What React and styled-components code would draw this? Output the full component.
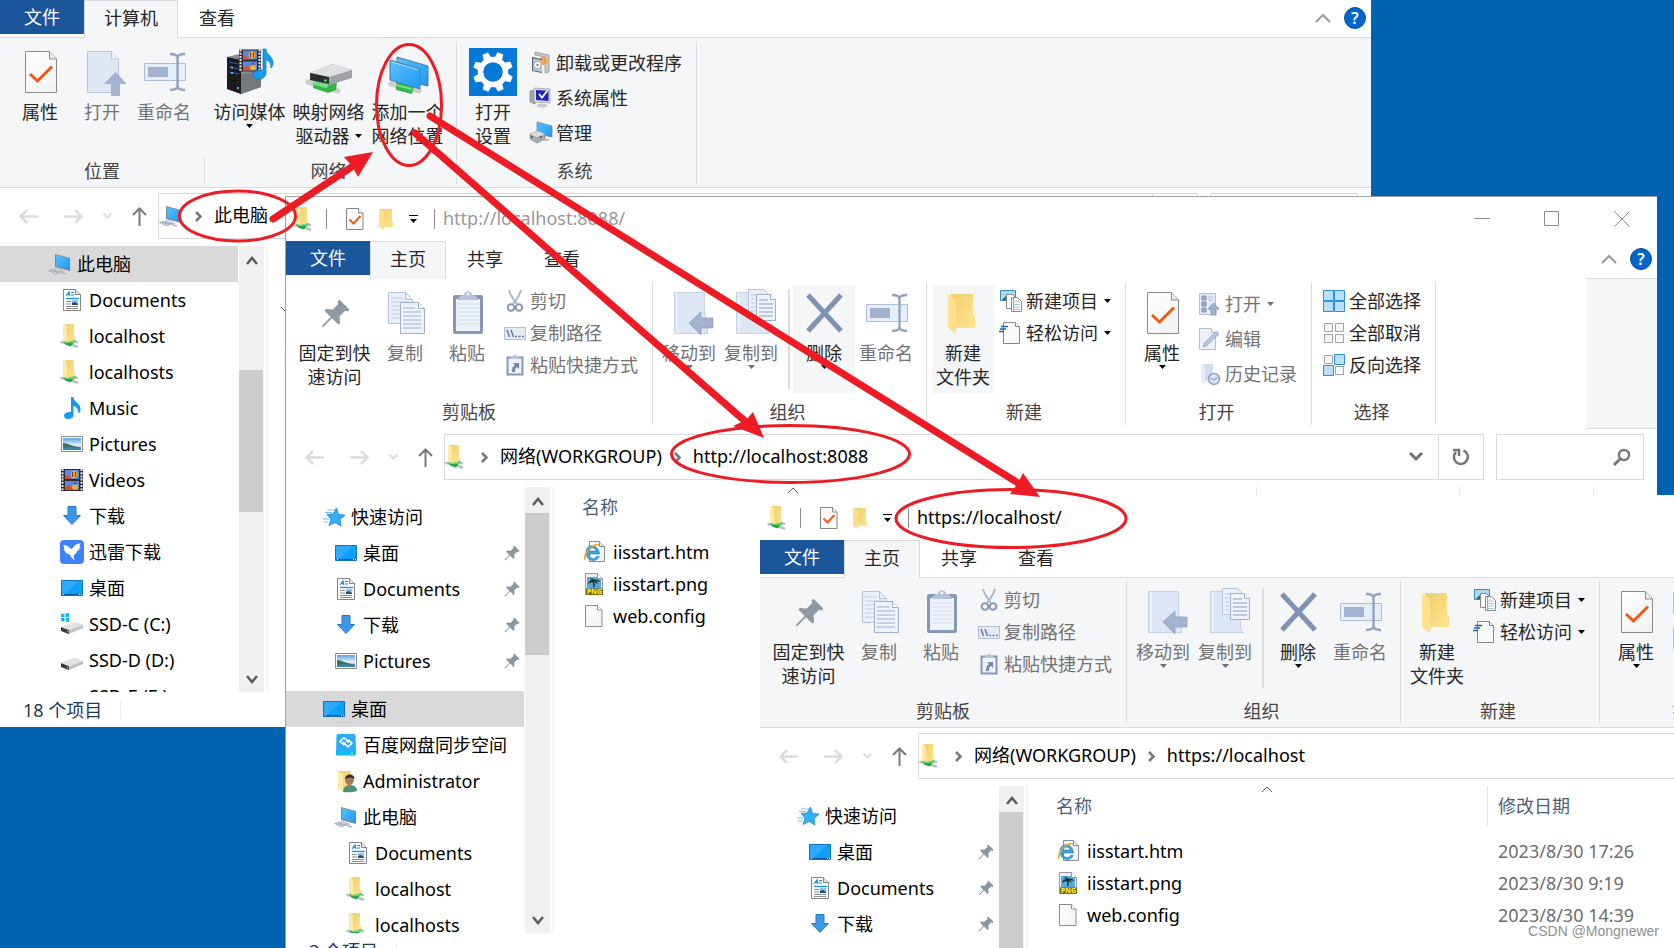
import React from "react";
import styled, { createGlobalStyle, css } from "styled-components";

const line = "#dadbdc";
const panel = "#f5f6f7";
const red = "#ed1c24";

/* ---------- shared drawings ---------- */

const Defs = () => (
  <DefsSvg aria-hidden="true">
    <defs>
      <linearGradient id="gold" x1="0" y1="0" x2="1" y2="1">
        <stop offset="0" stopColor="#efcf6c" />
        <stop offset="1" stopColor="#ffe491" />
      </linearGradient>
      <linearGradient id="screen" x1="0" y1="0" x2="1" y2="1">
        <stop offset="0" stopColor="#5cc0fb" />
        <stop offset="1" stopColor="#1a9bf6" />
      </linearGradient>
      <linearGradient id="metal" x1="0" y1="0" x2="1" y2="1">
        <stop offset="0" stopColor="#e4e5e7" />
        <stop offset="1" stopColor="#aeb0b4" />
      </linearGradient>
      <linearGradient id="sky" x1="0" y1="0" x2="0" y2="1">
        <stop offset="0" stopColor="#5f9fe4" />
        <stop offset="0.6" stopColor="#e4f1fb" />
        <stop offset="1" stopColor="#3d7ca4" />
      </linearGradient>
      <linearGradient id="sheet" x1="0" y1="0" x2="1" y2="1">
        <stop offset="0" stopColor="#ffffff" />
        <stop offset="1" stopColor="#f0f1f3" />
      </linearGradient>
    </defs>
  </DefsSvg>
);

const film = (
  <>
    <path d="M1 1h22v22H1z" fill="#2c2c2c" />
    <path d="M2.500 1v22M21.500 1v22" stroke="#e8e8e8" strokeWidth="2" strokeDasharray="2 1.2" />
    <path d="M5 2h14v9H5zM5 13h14v9H5z" fill="#5a86e4" />
    <path d="M5 11V7l3 1 4 3zM5 22v-3l5-2 3 5z" fill="#d9502e" />
    <ellipse cx="14" cy="6.500" rx="3.400" ry="3.800" fill="#e8b62c" />
    <path d="M12.500 4v5M15.500 4v5" stroke="#9c2c1e" strokeWidth="1.200" />
    <ellipse cx="15" cy="19" rx="3" ry="2.600" fill="#e8b62c" />
    <path d="M15 14l1.500 2h-3z" fill="#7c2420" />
  </>
);

const netFolder = (
  <>
    <path d="M5 0h9v12l1 1v5H5z" fill="url(#gold)" />
    <path d="M3 0l4 2v17l-4-2z" fill="#ffe9a6" />
    <path d="M1.500 18l4 1M13 21l4 1.500M15 18h2" stroke="#b9c0bd" strokeWidth="2.500" strokeLinecap="round" />
    <path d="M3 17.500l5 .5 8-2-4 5-1 1.500-5-1.500z" fill="#22a843" />
    <path d="M3 17.500l5 .5 8-2-3 3H6z" fill="#62d878" />
  </>
);

const computer = (
  <>
    <path d="M7 2l15 4v13L7 15z" fill="#7d8892" />
    <path d="M8 3l13.500 3.500v11L8 14z" fill="url(#screen)" />
    <path d="M11 18l6 1.500-3 1.500-5-1z" fill="#c2c6ca" />
    <path d="M0.500 18.500l8-2 6 2.500-7 3z" fill="#d3dae1" stroke="#98a4b0" strokeWidth="0.700" />
    <path d="M3 18.500l7 2M5.500 18l6.500 2" stroke="#8d99a5" strokeWidth="0.700" />
    <path d="M13 21.500l4 1 2-1-4-1z" fill="#aab3bb" />
  </>
);

const textDoc = (
  <>
    <path d="M3.500 1.500h12l5 5v16h-17z" fill="#fdfdfd" stroke="#848484" />
    <path d="M15.500 1.500v5h5" fill="#e7e7e7" stroke="#848484" />
    <path d="M6 8l3-4 .8 4M7 6.500h2.500M11 4.500h3M11 7h3" fill="none" stroke="#1793dc" strokeWidth="1.200" />
    <path d="M6 10.500h13" stroke="#1793dc" strokeWidth="1.300" />
    <path d="M6 13.500h5M6 16h5M6 18.500h12M6 20.500h12" stroke="#8e8e8e" />
    <path d="M12 12h6v5h-6z" fill="#8dc3ef" />
    <path d="M12 17v-2l3-1 3 2v1z" fill="#1f4d73" />
  </>
);

const drive = (
  <>
    <path d="M1 15l14-5 8 3v3l-14 6-8-3z" fill="url(#metal)" />
    <path d="M1 15l8 3v4l-8-3z" fill="#393b3e" />
    <path d="M1 15l14-5 8 3-14 5z" fill="#e2e3e5" />
    <path d="M7 19.300l1.500.6" stroke="#42d04c" strokeWidth="1.500" />
  </>
);

const pinShape = "M15 2l7 7-1 1.500-2-.5-4 4 .3 5-1.300 1-4.600-4.600L3 22l-1-1 6.500-6.500L4 10l1-1.300 5 .3 4-4-.5-2z";

const smallIcons = {
  pc: computer,
  doc: textDoc,
  netFolder,
  film,
  music: (
    <path
      d="M11 1h2.500c0 5 7 6 7 12 0 2-1 4-2 5 0-4-1-7-5-8v9c0 3-3 4-5.500 4S4 21.500 4 19.500s3-4 7-3.500z"
      fill="#129bf0"
    />
  ),
  pictures: (
    <>
      <path d="M1.500 4.500h21v15h-21z" fill="#fff" stroke="#8d8d8d" />
      <path d="M3 6h18v12H3z" fill="url(#sky)" />
      <path d="M3 11c4 0 8 3 18 4.500V18H3z" fill="#3b6b62" />
      <path d="M3 16c6-2 12 0 18 0v2H3z" fill="#3c83ad" />
    </>
  ),
  download: <path d="M8 2.500h8v9h4.500L12 20.500 3.500 11.500H8z" fill="#3c97e8" stroke="#2579c4" />,
  xunlei: (
    <>
      <rect width="24" height="24" rx="4" fill="#3f80fb" />
      <path
        d="M3 5c3 0 5 1 7 3 1 1.500 2 1 3-.5 2-3 5-4 8-4.500-1 1-1 2-1.500 3.500l1.500 1-2 .5.500 2-2 .5c-1 3-3 4-4 5l1 5c-2-2-4-4-5-6-4-1-5-3-5.500-6C4 7.500 4 6 3 5z"
        fill="#fff"
      />
    </>
  ),
  desktop: (
    <>
      <path d="M1.500 4.500h21v15h-21z" fill="#109efb" stroke="#1173b8" />
      <path d="M2 5h17L5 18H2z" fill="#2eabfc" />
      <path d="M2 18.500h20" stroke="#0c5f9e" />
      <path d="M3 18.500h1M19 18.500h1M21 18.500h1" stroke="#fff" />
    </>
  ),
  driveC: (
    <>
      {drive}
      <path d="M1 2l3.500-.5V5H1zM5.500 1.500L9 1v4H5.500zM1 6h3.500v3.500L1 9zM5.500 6H9v4l-3.500-.5z" fill="#12b3f3" />
    </>
  ),
  drive,
  star: (
    <>
      <path
        d="M14.500 3l2 6.500 6.500.5-5 4.500 1 6.500-6-3.500-6 3 2-6.500L5 9.500l6-.5z"
        fill="#35aef5"
        stroke="#1788d0"
        strokeWidth="0.800"
      />
      <path d="M5 5h8M3 7.500h7M1 14h6M2 17h4" stroke="#6cc3f5" />
    </>
  ),
  baidu: (
    <>
      <path d="M4 1h16c1 0 1.500 1 1.500 2L22 20H2L2.500 3c0-1 .5-2 1.500-2z" fill="#29adf7" />
      <path d="M2 18h20v3c0 1-.5 1.500-1.500 1.500h-17C2.500 22.500 2 22 2 21z" fill="#12b9f3" />
      <path d="M17 20.500h2" stroke="#fff" />
      <path
        d="M10 4.500l-4 4 3.500 3 2-2M14 14l4-4-3.500-3-2 2M10 4.500l5 5M9 9l5 5"
        fill="none"
        stroke="#fff"
        strokeWidth="1.600"
      />
    </>
  ),
  admin: (
    <>
      <path d="M5 2h12v18H5z" fill="url(#gold)" />
      <path d="M4 2l5 3v18l-5-3z" fill="#ffe9a6" />
      <path d="M9 23c0-5 3-7 7-7s7 2 7 6c-4 1.500-10 1.500-14 1z" fill="#4c9279" />
      <circle cx="15.500" cy="11" r="4.500" fill="#a97856" />
      <path d="M11 10c0-6 9.500-6 9.500 0-3-2-6-2-9.500 0z" fill="#3d2d25" />
      <path d="M13.500 15l2 4 2-4z" fill="#a97856" />
    </>
  ),
  ie: (
    <>
      <path d="M7.500 1.500h10l5 5v15h-15z" fill="url(#sheet)" stroke="#8d8d8d" />
      <path d="M17.500 1.500v5h5" fill="#e7e7e7" stroke="#8d8d8d" />
      <path
        d="M17.500 14H7c0 5 6 6 7.500 2.500h2.700C15 22.500 4 22 4 12.500S17 3.500 17.500 14zM7.300 11h6.900C13.500 7 8 7 7.300 11z"
        fill="#3ea4de"
        stroke="#1b77b8"
        strokeWidth="0.600"
      />
      <path d="M3 20C-1 15 12 1 17 5c-5-1-14 6-14 15z" fill="#f1b928" stroke="#d89a14" strokeWidth="0.600" />
    </>
  ),
  png: (
    <>
      <path d="M3.500 1.500h12l5 5v16h-17z" fill="#eceef0" stroke="#989898" />
      <path d="M15.500 1.500v5h5" fill="#fff" stroke="#989898" />
      <path d="M5 5h10v2h4v10H5z" fill="#55a9dc" />
      <path d="M11 15c1-3 0-4-1-5l-4 2c1-3 2-4 4-4l-2-2c3 0 4 1 5 2 2-1 4 0 5 2l-4-1 2 3-4-2c1 2 1 3 .5 5z" fill="#16352c" />
      <path d="M4 16.500h17v6.500H4z" fill="#7a6a10" />
      <text x="12.500" y="22.300" fontSize="7" fontWeight="700" textAnchor="middle" fill="#fdf04d">
        PNG
      </text>
    </>
  ),
  file: (
    <>
      <path d="M3.500 1.500h12l4.500 4.500v16.500H3.500z" fill="url(#sheet)" stroke="#8d8d8d" />
      <path d="M15.500 1.500V6H20" fill="#fff" stroke="#8d8d8d" />
    </>
  ),
  pin: <path d={pinShape} fill="#8b98a1" />,
  checkDoc: (
    <>
      <path d="M3.500 1.500h12l4.500 4.500v16.500H3.500z" fill="#fafafa" stroke="#858585" />
      <path d="M15.500 1.500V6H20" fill="#fff" stroke="#858585" />
      <path d="M6.500 12.500l4 4 7-7.500" fill="none" stroke="#f25c13" strokeWidth="2" />
    </>
  ),
  folder: (
    <>
      <path d="M6 2h12v13l1 1v4H6z" fill="url(#gold)" />
      <path d="M5 2l5 3v18l-5-3z" fill="#ffe08a" />
    </>
  ),
  uninstall: (
    <>
      <path d="M6 1l14 3v17l-4 1V6L6 4z" fill="#c5c7c9" stroke="#8c8f91" strokeWidth="0.700" />
      <circle cx="14" cy="10" r="4" fill="#f0a23b" />
      <path d="M3 6l10 2v14L3 20z" fill="#5a6268" />
      <path d="M4 7.500l9 1.500v12l-9-1.500z" fill="#b9c4c9" />
      <circle cx="8.500" cy="14" r="3.800" fill="#eef1f2" stroke="#8d979c" strokeWidth="0.700" />
      <circle cx="8.500" cy="14" r="1" fill="#59656b" />
    </>
  ),
  sysProps: (
    <>
      <path d="M1 5l5-1v14l-5-2z" fill="#a5a8ac" stroke="#707478" strokeWidth="0.600" />
      <path d="M5 2l16 1v14L5 16z" fill="#d9dadc" stroke="#8a8d92" strokeWidth="0.600" />
      <path d="M7 4l12.500.7V15L7 14z" fill="#2026b8" />
      <path d="M10 8l3 3.500 5.500-7" fill="none" stroke="#fff" strokeWidth="1.800" />
      <ellipse cx="13" cy="19.500" rx="5.500" ry="2" fill="#c8cacd" />
    </>
  ),
  manage: (
    <>
      <path d="M8 1l15 4v11L8 13z" fill="url(#screen)" stroke="#6d7f8c" strokeWidth="0.700" />
      <path d="M1 13l8-3 7 3v5l-8 4-7-4z" fill="#a7adb2" stroke="#777d82" strokeWidth="0.600" />
      <path d="M1 13l8-3 7 3-8 3z" fill="#d8dcdf" />
      <path d="M3 15v2M12 15v2" stroke="#3f4548" strokeWidth="1.500" />
      <path d="M16 18h5l-3 2h-4z" fill="#b7bbbf" />
    </>
  ),
  scissors: (
    <>
      <path d="M6 1c1 4 4 9 8 14M18 1c-1 4-4 9-8 14" fill="none" stroke="#a8b5cd" strokeWidth="1.800" />
      <circle cx="8" cy="18.500" r="3.300" fill="none" stroke="#8797b7" strokeWidth="2" />
      <circle cx="16" cy="18.500" r="3.300" fill="none" stroke="#8797b7" strokeWidth="2" />
    </>
  ),
  copyPath: (
    <>
      <path d="M1.500 6.500h21v12h-21z" fill="#e4ebf6" stroke="#b2bfd6" />
      <path d="M4 9l2.500 7M8 9l2.500 7" stroke="#68799c" strokeWidth="1.500" />
      <path d="M12 15.500h2M15.500 15.500h2M19 15.500h2" stroke="#68799c" strokeWidth="1.500" />
    </>
  ),
  pasteLink: (
    <>
      <path d="M4.500 4.500h15v17h-15z" fill="#edf2fa" stroke="#8797b7" strokeWidth="2" />
      <path d="M8 5V3h2.500l1.500-2 1.500 2H16v2z" fill="#b9c5da" />
      <path d="M9 19c0-4 1-6 3-7l-2-2h6v6l-2-2c-2 1-2 3-2 5z" fill="#7486aa" />
    </>
  ),
  newItem: (
    <>
      <path d="M1.500 1.500h15v10h-15z" fill="#a8dbf3" stroke="#3f8cb5" />
      <path d="M3 11l4-4 3 4z" fill="#236a4f" />
      <path d="M7.500 5.500h6l3 3v11h-9z" fill="#fff" stroke="#8a8a8a" />
      <path d="M12.500 8.500h6l4 4v10h-10z" fill="#fff" stroke="#8a8a8a" />
      <path d="M14 13h7M14 15.500h7M14 18h7M14 20.500h7" stroke="#9fc6e6" />
      <path d="M14.500 9v13" stroke="#e98a8a" />
    </>
  ),
  easyAccess: (
    <>
      <path d="M4.500 1.500h12l4 4v17h-16z" fill="#fafafa" stroke="#858585" />
      <path d="M16.500 1.500v4h4" fill="#fff" stroke="#858585" />
      <path d="M2 5.500h7M1 8h6M0 10.500h5" stroke="#1668b4" strokeWidth="1.400" />
    </>
  ),
  openSmall: (
    <>
      <path d="M1.500 1.500h16v21h-16z" fill="#e4ebf6" stroke="#b0bed6" />
      <path d="M4 4h4v4H4zM4 10h4v4H4zM4 16h4v4H4z" fill="#9dadc9" stroke="#7f90b1" />
      <path d="M10 5h5M10 8h5" stroke="#b0bed6" />
      <path d="M15.500 11l5.500 6h-3v6h-5v-6h-3z" fill="#a3b2cd" stroke="#8b9bbb" />
    </>
  ),
  edit: (
    <>
      <path d="M1.500 1.500h12l4 4v17h-16z" fill="#edf2fa" stroke="#b0bed6" />
      <path d="M13.500 1.500v4h4" fill="#fff" stroke="#b0bed6" />
      <path d="M5 20l1.500-4L18 4.500l3 2.500L9 18.500z" fill="#b7c4da" stroke="#94a4c2" strokeWidth="0.800" />
    </>
  ),
  history: (
    <>
      <path d="M3 2h12v17H3z" fill="#d3ddec" />
      <path d="M3 2l4 2v19l-4-3z" fill="#e5ecf6" />
      <circle cx="16" cy="17" r="5.500" fill="#dce4f0" stroke="#95a4c0" strokeWidth="1.500" />
      <path d="M12.500 16l3.500 2 3.500-2.500" fill="none" stroke="#95a4c0" strokeWidth="1.300" />
    </>
  ),
  selectAll: (
    <path
      d="M1.500 1.500h10v10h-10zM12.500 1.500h10v10h-10zM1.500 12.500h10v10h-10zM12.500 12.500h10v10h-10z"
      fill="#b8e0fb"
      stroke="#2a92dd"
    />
  ),
  selectNone: (
    <path d="M2.500 2.500h8v8h-8zM13.500 2.500h8v8h-8zM2.500 13.500h8v8h-8zM13.500 13.500h8v8h-8z" fill="#f7f7f7" stroke="#a2a2a2" />
  ),
  invert: (
    <>
      <path d="M2.500 2.500h8v8h-8zM13.500 13.500h8v8h-8z" fill="#f7f7f7" stroke="#a2a2a2" />
      <path d="M12.500 1.500h10v10h-10zM1.500 12.500h10v10h-10z" fill="#b8e0fb" stroke="#2a92dd" />
    </>
  ),
};

const gearTeeth = [0, 45, 90, 135, 180, 225, 270, 315];

const bigIcons = {
  properties: (
    <>
      <path d="M9.500 3.500h24l7 7v34h-31z" fill="url(#sheet)" stroke="#8b8b8b" />
      <path d="M33.500 3.500v7.500h7.500" fill="#e9e9e9" stroke="#8b8b8b" />
      <path d="M14 26l7.500 7L36 18.500" fill="none" stroke="#f2590f" strokeWidth="3" />
    </>
  ),
  open: (
    <>
      <path d="M9.500 3.500h24l7 7v34h-31z" fill="#e0e8f5" stroke="#b7c5dd" />
      <path d="M33.500 3.500v7.500h7.500" fill="#f1f5fb" stroke="#b7c5dd" />
      <path d="M37.500 24L49 36h-7v12h-9V36h-7z" fill="#a3b2ce" />
    </>
  ),
  rename: (
    <>
      <path d="M4.500 15.500h41v17h-41z" fill="#e6eefa" stroke="#aebcd6" />
      <path d="M8 19h20v10H8z" fill="#a3b2ce" />
      <path
        d="M37.500 10v28M30 6c5 0 7.500 1 7.500 4 0-3 2.500-4 7.500-4M30 42c5 0 7.500-1 7.500-4 0 3 2.500 4 7.500 4"
        fill="none"
        stroke="#93a3c1"
        strokeWidth="2.400"
      />
    </>
  ),
  media: (
    <>
      <path d="M1 9l12-3 22 7v26l-20 7-14-5z" fill="#8c8f93" />
      <path d="M1 9l14 3v34L1 41z" fill="#191b1e" />
      <path d="M3 14l10 2M3 19l10 2M3 24l10 2" stroke="#2f5fa0" />
      <path d="M5 19.500h2M5 25h2M11 40h2" stroke="#35c6f5" strokeWidth="2" />
      <path d="M15 26l20-3v16l-20 7z" fill="#75787d" />
      <svg x="12" y="0" width="24" height="25" viewBox="0 0 24 24">{film}</svg>
      <path
        d="M37 1h3c0 6 7 7 7 14 0 2-1 4-2 5 0-4-1-7-5-8v13c0 4-4 6-7 6s-6-1-6-4 4-5 10-5z"
        fill="#159df0"
        stroke="#0d73bb"
        strokeWidth="0.700"
      />
    </>
  ),
  netDrive: (
    <>
      <path d="M3 34l30 9" stroke="#c9cdcc" strokeWidth="5" strokeLinecap="round" />
      <path d="M9 33l14 4 9-3-1 8-8 3-15-5z" fill="#35b64a" />
      <path d="M9 33l14 4-1 3-13-3z" fill="#79dd84" />
      <path d="M5 25L27 16l20 6v8l-23 7-19-5z" fill="#9ea1a5" />
      <path d="M5 25L27 16l20 6-23 7z" fill="#dfe0e2" />
      <path d="M5 25l19 4v7L5 32z" fill="#2b2d30" />
      <path d="M19 32.500h3" stroke="#43dd4e" strokeWidth="2" />
    </>
  ),
  addNet: (
    <>
      <path d="M13 9l31 9v20l-31-7z" fill="url(#screen)" stroke="#4f7f9c" />
      <path d="M7 36l28 7" stroke="#c9cdcc" strokeWidth="5" strokeLinecap="round" />
      <path d="M12 32l18 5-2 9-16-4z" fill="#35b64a" />
      <path d="M12 36l16 4-1 2-15-4z" fill="#79dd84" />
      <path d="M6 12l30 9v20L6 32z" fill="url(#screen)" stroke="#4f7f9c" />
      <path d="M7.500 14l27 8" stroke="#a9dcfa" />
    </>
  ),
  gear: (
    <>
      <path d="M0 0h48v48H0z" fill="#0478d7" />
      <circle cx="24" cy="24" r="12.500" fill="none" stroke="#fff" strokeWidth="5.500" />
      {gearTeeth.map((angle) => (
        <path key={angle} d="M20 10l1-6h6l1 6z" fill="#fff" transform={`rotate(${angle + 22} 24 24)`} />
      ))}
    </>
  ),
  pin: (
    <svg x="8" y="8" width="33" height="33" viewBox="0 0 24 24">
      <path d={pinShape} fill="#8e9aa3" />
    </svg>
  ),
  copy: (
    <>
      <path d="M7.500 3.500h17l7 7v24h-24z" fill="#e9f0fa" stroke="#b5c4dc" />
      <path d="M24.500 3.500v7h7" fill="none" stroke="#b5c4dc" />
      <path d="M10 9h12M10 13h18M10 17h9M10 21h9M10 25h9M10 29h9" stroke="#c4d0e4" />
      <path d="M19.500 13.500h18l6 6v25h-24z" fill="#edf3fb" stroke="#9fb0cd" />
      <path d="M37.500 13.500v6h6" fill="#fff" stroke="#9fb0cd" />
      <path d="M22 19h12M22 23h18M22 27h18M22 31h18M22 35h18M22 39h18" stroke="#9fb0cd" />
    </>
  ),
  paste: (
    <>
      <rect x="10" y="6" width="30" height="39" rx="2" fill="#8797b7" />
      <path d="M13 10h24v32H13z" fill="#edf3fb" />
      <path d="M14 15h22M14 19h22M14 23h22M14 27h22M14 31h22M14 35h22" stroke="#d3deee" />
      <path d="M15 11c0-3 3-5 6-5 0-5 8-5 8 0 3 0 6 2 6 5z" fill="#b5c2d9" />
      <circle cx="25" cy="5" r="1.500" fill="#edf3fb" />
    </>
  ),
  moveTo: (
    <>
      <path d="M9.500 3.500h30v23l3 3v15h-33z" fill="#dce6f4" stroke="#c6d3e7" />
      <path d="M12 4v40" stroke="#e9f0f9" strokeWidth="2" />
      <path d="M24 34l12-11v6h12v10H36v7z" fill="#a3b2ce" stroke="#8d9dbd" strokeWidth="0.700" />
    </>
  ),
  copyTo: (
    <>
      <path d="M9.500 3.500h30v38l3 3h-33z" fill="#dce6f4" stroke="#c6d3e7" />
      <path d="M12 4v40" stroke="#e9f0f9" strokeWidth="2" />
      <path d="M21.500.500h15l5 5v21h-20z" fill="#e9f0fa" stroke="#b5c4dc" />
      <path d="M24 6h10M24 10h4M24 14h4M24 18h4M24 22h4" stroke="#b5c4dc" />
      <path d="M29.500 5.500h14l5 5v21h-19z" fill="#edf3fb" stroke="#9fb0cd" />
      <path d="M43.500 5.500v5h5" fill="#fff" stroke="#9fb0cd" />
      <path d="M32 11h9M32 15h14M32 19h14M32 23h14M32 27h14" stroke="#8d9fc0" />
    </>
  ),
  remove: <path d="M8 6l33 36M41 6L8 42" stroke="#8192b4" strokeWidth="5" />,
  newFolder: (
    <>
      <path d="M12 5h22v21l2 2v11H12z" fill="url(#gold)" />
      <path d="M9 5l8 6v34l-8-6z" fill="#ffe08c" />
    </>
  ),
};

const SmallIcon = ({ name, size = 24 }) => (
  <Drawing width={size} height={size} viewBox="0 0 24 24" aria-hidden="true">
    {smallIcons[name]}
  </Drawing>
);

const BigIcon = ({ name }) => (
  <Drawing width="48" height="48" viewBox="0 0 48 48" aria-hidden="true">
    {bigIcons[name]}
  </Drawing>
);

const Caret = ({ muted }) => (
  <Drawing width="7" height="4" viewBox="0 0 7 4" aria-hidden="true">
    <path d="M0 0h7L3.500 4z" fill={muted ? "#6d6d6d" : "#000"} />
  </Drawing>
);

/* ---------- data ---------- */

const computerGroups = [
  {
    label: "位置",
    shortRule: true,
    lead: true,
    buttons: [
      { icon: "properties", lines: ["属性"] },
      { icon: "open", lines: ["打开"], off: true },
      { icon: "rename", lines: ["重命名"], off: true },
    ],
  },
  {
    label: "网络",
    buttons: [
      { icon: "media", lines: ["访问媒体"], wide: true, caret: true },
      { icon: "netDrive", lines: ["映射网络", "驱动器"], wide: true, inlineCaret: true },
      { icon: "addNet", lines: ["添加一个", "网络位置"], wide: true },
    ],
  },
  {
    label: "系统",
    roomy: true,
    buttons: [{ icon: "gear", lines: ["打开", "设置"] }],
    list: [
      { icon: "uninstall", text: "卸载或更改程序" },
      { icon: "sysProps", text: "系统属性" },
      { icon: "manage", text: "管理" },
    ],
  },
];

const homeGroups = [
  {
    label: "剪贴板",
    lead: true,
    buttons: [
      { icon: "pin", lines: ["固定到快", "速访问"], wide: true },
      { icon: "copy", lines: ["复制"], off: true },
      { icon: "paste", lines: ["粘贴"], off: true },
    ],
    list: [
      { icon: "scissors", text: "剪切", off: true },
      { icon: "copyPath", text: "复制路径", off: true },
      { icon: "pasteLink", text: "粘贴快捷方式", off: true },
    ],
  },
  {
    label: "组织",
    buttons: [
      { icon: "moveTo", lines: ["移动到"], off: true, caret: true },
      { icon: "copyTo", lines: ["复制到"], off: true, caret: true, ruleAfter: true },
      { icon: "remove", lines: ["删除"], caret: true, tinted: true },
      { icon: "rename", lines: ["重命名"], off: true },
    ],
  },
  {
    label: "新建",
    buttons: [{ icon: "newFolder", lines: ["新建", "文件夹"], tinted: true }],
    list: [
      { icon: "newItem", text: "新建项目", caret: true },
      { icon: "easyAccess", text: "轻松访问", caret: true },
    ],
  },
  {
    label: "打开",
    roomy: true,
    buttons: [{ icon: "properties", lines: ["属性"], caret: true }],
    list: [
      { icon: "openSmall", text: "打开", off: true, caret: true },
      { icon: "edit", text: "编辑", off: true },
      { icon: "history", text: "历史记录", off: true },
    ],
  },
  {
    label: "选择",
    list: [
      { icon: "selectAll", text: "全部选择" },
      { icon: "selectNone", text: "全部取消" },
      { icon: "invert", text: "反向选择" },
    ],
  },
];

const computerTree = [
  { icon: "pc", text: "此电脑", depth: 1, selected: true },
  { icon: "doc", text: "Documents", depth: 2 },
  { icon: "netFolder", text: "localhost", depth: 2 },
  { icon: "netFolder", text: "localhosts", depth: 2 },
  { icon: "music", text: "Music", depth: 2 },
  { icon: "pictures", text: "Pictures", depth: 2 },
  { icon: "film", text: "Videos", depth: 2 },
  { icon: "download", text: "下载", depth: 2 },
  { icon: "xunlei", text: "迅雷下载", depth: 2 },
  { icon: "desktop", text: "桌面", depth: 2 },
  { icon: "driveC", text: "SSD-C (C:)", depth: 2 },
  { icon: "drive", text: "SSD-D (D:)", depth: 2 },
  { icon: "drive", text: "SSD-E (E:)", depth: 2 },
];

const quickTree = [
  { icon: "star", text: "快速访问", depth: 0, spaced: true },
  { icon: "desktop", text: "桌面", depth: 1, pinned: true },
  { icon: "doc", text: "Documents", depth: 1, pinned: true },
  { icon: "download", text: "下载", depth: 1, pinned: true },
];

const fullTree = [
  ...quickTree,
  { icon: "pictures", text: "Pictures", depth: 1, pinned: true },
  { icon: "desktop", text: "桌面", depth: 0, spaced: true, selected: true },
  { icon: "baidu", text: "百度网盘同步空间", depth: 1 },
  { icon: "admin", text: "Administrator", depth: 1 },
  { icon: "pc", text: "此电脑", depth: 1 },
  { icon: "doc", text: "Documents", depth: 2 },
  { icon: "netFolder", text: "localhost", depth: 2 },
  { icon: "netFolder", text: "localhosts", depth: 2 },
];

const files = [
  { icon: "ie", name: "iisstart.htm", date: "2023/8/30 17:26" },
  { icon: "png", name: "iisstart.png", date: "2023/8/30 9:19" },
  { icon: "file", name: "web.config", date: "2023/8/30 14:39" },
];

/* ---------- window parts ---------- */

function TitleBar({ title, active, controls }) {
  return (
    <TitleRow>
      <SmallIcon name="netFolder" />
      <TitleRule />
      <QuickButtons>
        <PlainButton aria-label="属性">
          <SmallIcon name="checkDoc" />
        </PlainButton>
        <PlainButton aria-label="新建文件夹">
          <SmallIcon name="folder" />
        </PlainButton>
      </QuickButtons>
      <PlainButton aria-label="自定义">
        <Drawing width="9" height="9" viewBox="0 0 9 9">
          <path d="M0 .5h9" stroke="#000" />
          <path d="M1 4h7L4.500 8z" />
        </Drawing>
      </PlainButton>
      <TitleRule $second />
      <TitleText $active={active}>{title}</TitleText>
      {controls && (
        <WindowControls>
          <ControlButton aria-label="最小化">
            <Drawing width="16" height="16" fill="none" stroke="#8c8c8c">
              <path d="M0 7.500h16" />
            </Drawing>
          </ControlButton>
          <ControlButton aria-label="最大化">
            <Drawing width="16" height="16" fill="none" stroke="#8c8c8c">
              <path d="M.5.5h14v14H.5z" />
            </Drawing>
          </ControlButton>
          <ControlButton aria-label="关闭">
            <Drawing width="16" height="16" fill="none" stroke="#8c8c8c">
              <path d="M.5.5l15 15M15.500.5l-15 15" />
            </Drawing>
          </ControlButton>
        </WindowControls>
      )}
    </TitleRow>
  );
}

function Tabs({ names, plain }) {
  return (
    <TabRow $plain={plain}>
      <FileTab>文件</FileTab>
      {names.map((name, index) => (
        <Tab key={name} $active={index === 0}>
          {name}
        </Tab>
      ))}
      <TabTools>
        <PlainButton aria-label="折叠功能区">
          <Drawing width="16" height="10" fill="none" stroke="#9b9b9b" strokeWidth="2">
            <path d="M1 9l7-7 7 7" />
          </Drawing>
        </PlainButton>
        <HelpButton aria-label="帮助">?</HelpButton>
      </TabTools>
    </TabRow>
  );
}

function RibbonGroup({ group, plain }) {
  return (
    <Group $lead={group.lead} $shortRule={group.shortRule}>
      <GroupContent>
        {group.buttons?.map((item) => (
          <React.Fragment key={item.lines.join("")}>
            <BigButton disabled={item.off} $wide={item.wide} $tinted={plain && item.tinted}>
              <BigIcon name={item.icon} />
              <BigLabel>
                {item.lines.map((text, index) => (
                  <span key={text}>
                    {text}
                    {item.inlineCaret && index === 1 && <Caret />}
                  </span>
                ))}
              </BigLabel>
              {item.caret && <Caret muted={item.off} />}
            </BigButton>
            {item.ruleAfter && <InnerRule />}
          </React.Fragment>
        ))}
        {group.list && (
          <ActionList $roomy={group.roomy}>
            {group.list.map((item) => (
              <ActionButton key={item.text} disabled={item.off} $roomy={group.roomy}>
                <SmallIcon name={item.icon} />
                <span>{item.text}</span>
                {item.caret && <Caret muted={item.off} />}
              </ActionButton>
            ))}
          </ActionList>
        )}
      </GroupContent>
      <GroupLabel>{group.label}</GroupLabel>
    </Group>
  );
}

function AddressRow({ icon, path }) {
  return (
    <AddressBar>
      <NavButtons>
        <PlainButton aria-label="后退" disabled>
          <Drawing width="19" height="15" fill="none" stroke="#dcdcdc" strokeWidth="2.500">
            <path d="M19 7.500H2M8 1L1.500 7.500 8 14" />
          </Drawing>
        </PlainButton>
        <PlainButton aria-label="前进" disabled>
          <Drawing width="19" height="15" fill="none" stroke="#dcdcdc" strokeWidth="2.500">
            <path d="M0 7.500h17M11 1l6.500 6.500L11 14" />
          </Drawing>
        </PlainButton>
        <PlainButton aria-label="最近" disabled>
          <Drawing width="9" height="6" fill="none" stroke="#dcdcdc" strokeWidth="2">
            <path d="M.5.5l4 4 4-4" />
          </Drawing>
        </PlainButton>
        <PlainButton aria-label="向上">
          <Drawing width="15" height="19" fill="none" stroke="#7a7a7a" strokeWidth="2">
            <path d="M7.500 19V2M1 8l6.500-6.500L14 8" />
          </Drawing>
        </PlainButton>
      </NavButtons>
      <AddressBox>
        <SmallIcon name={icon} />
        {path.map((part) => (
          <Crumb key={part}>
            <Drawing width="7" height="11" fill="none" stroke="#777" strokeWidth="2.500">
              <path d="M1 1l4.500 4.500L1 10" />
            </Drawing>
            <CrumbLink href="#">{part}</CrumbLink>
          </Crumb>
        ))}
        <BoxTools>
          <BoxButton aria-label="展开">
            <Drawing width="14" height="10" fill="none" stroke="#6f6f6f" strokeWidth="3">
              <path d="M1 1l6 6 6-6" />
            </Drawing>
          </BoxButton>
          <BoxButton aria-label="刷新" $ruled>
            <Drawing width="18" height="18" fill="none" stroke="#777" strokeWidth="2.500">
              <path d="M11.500 2.500A7 7 0 1 1 4 4" />
              <path d="M1 2h6v6" />
            </Drawing>
          </BoxButton>
        </BoxTools>
      </AddressBox>
      <SearchBox>
        <SearchInput type="text" aria-label="搜索" />
        <Drawing width="18" height="18" fill="none" stroke="#777">
          <circle cx="11" cy="7" r="5" strokeWidth="2.500" />
          <path d="M7.500 10.500L1 17" strokeWidth="3" />
        </Drawing>
      </SearchBox>
    </AddressBar>
  );
}

function Tree({ items }) {
  return (
    <TreeList>
      {items.map((item, index) => (
        <TreeRow key={index} $depth={item.depth} $selected={item.selected} $spaced={item.spaced}>
          <SmallIcon name={item.icon} />
          <TreeLink href="#">{item.text}</TreeLink>
          {item.pinned && <SmallIcon name="pin" size={18} />}
        </TreeRow>
      ))}
    </TreeList>
  );
}

function ScrollBar({ middle }) {
  return (
    <Track>
      <PlainButton aria-label="向上滚动">
        <Drawing width="12" height="26" fill="none" stroke="#5a5a5a" strokeWidth="2.500">
          <path d="M1 18l5-6 5 6" />
        </Drawing>
      </PlainButton>
      <Thumb $middle={middle} />
      <PlainButton aria-label="向下滚动">
        <Drawing width="12" height="26" fill="none" stroke="#5a5a5a" strokeWidth="2.500">
          <path d="M1 10l5 6 5-6" />
        </Drawing>
      </PlainButton>
    </Track>
  );
}

function FileTable({ dated }) {
  return (
    <Table>
      <colgroup>
        <col width="442" />
        <col width="243" />
        <col width="203" />
        <col width="134" />
      </colgroup>
      <thead>
        <tr>
          <HeadCell scope="col">
            名称
            <SortMark width="12" height="7" fill="none" stroke="#5a5a5a">
              <path d="M1 6l5-5 5 5" />
            </SortMark>
          </HeadCell>
          <HeadCell scope="col">{dated ? "修改日期" : ""}</HeadCell>
          <HeadCell />
          <HeadCell />
        </tr>
      </thead>
      <tbody>
        {files.map((file) => (
          <tr key={file.name}>
            <NameCell>
              <FileName>
                <SmallIcon name={file.icon} />
                {file.name}
              </FileName>
            </NameCell>
            <DateCell>{dated ? file.date : ""}</DateCell>
          </tr>
        ))}
      </tbody>
    </Table>
  );
}

function ExplorerWindow({ place, title, tabs, groups, plain, address, tree, middleThumb, status, children }) {
  return (
    <Frame $place={place}>
      {title && <TitleBar {...title} />}
      <Tabs names={tabs} plain={plain} />
      <Ribbon $plain={plain}>
        {groups.map((group) => (
          <RibbonGroup key={group.label} group={group} plain={plain} />
        ))}
        {plain && <RibbonEnd />}
      </Ribbon>
      <AddressRow {...address} />
      <Body>
        <Tree items={tree} />
        <ScrollBar middle={middleThumb} />
        <PaneRule />
        <FilePane>{children}</FilePane>
      </Body>
      {status && (
        <StatusBar>
          <span>{status}</span>
        </StatusBar>
      )}
    </Frame>
  );
}

// Red circles and arrows that explain which entry leads to which window
const Annotations = () => (
  <Overlay aria-hidden="true">
    <g fill="none" stroke={red} strokeWidth="3">
      <ellipse cx="237.500" cy="216" rx="58" ry="25" />
      <ellipse cx="409" cy="105" rx="32.500" ry="60.500" />
      <ellipse cx="790.500" cy="454" rx="119" ry="28.500" />
      <ellipse cx="1011" cy="518.500" rx="115" ry="29" />
    </g>
    <g stroke={red} strokeWidth="7" strokeLinecap="round">
      <path d="M273 219L353 166" />
      <path d="M415 133L746 422" />
      <path d="M430 116L1018 483" />
    </g>
    <g fill={red}>
      <path d="M373 152l-29 5 8 9 6 11z" />
      <path d="M764 438l-11-26-7 8-13 6z" />
      <path d="M1040 497l-17-24-5 10-8 11z" />
    </g>
  </Overlay>
);

export default function App() {
  return (
    <>
      <GlobalStyle />
      <Defs />
      <Desktop lang="zh-CN">
        <ExplorerWindow
          place="computer"
          tabs={["计算机", "查看"]}
          groups={computerGroups}
          address={{ icon: "pc", path: ["此电脑"] }}
          tree={computerTree}
          middleThumb
          status="18 个项目"
        >
          <GroupMark width="12" height="7" fill="none" stroke="#5a5a5a">
            <path d="M1 1l5 5 5-5" />
          </GroupMark>
        </ExplorerWindow>
        <ExplorerWindow
          place="http"
          title={{ title: "http://localhost:8088/", controls: true }}
          tabs={["主页", "共享", "查看"]}
          groups={homeGroups}
          plain
          address={{ icon: "netFolder", path: ["网络(WORKGROUP)", "http://localhost:8088"] }}
          tree={fullTree}
          status="3 个项目"
        >
          <FileTable />
        </ExplorerWindow>
        <ExplorerWindow
          place="https"
          title={{ title: "https://localhost/", active: true }}
          tabs={["主页", "共享", "查看"]}
          groups={homeGroups.slice(0, 4)}
          address={{ icon: "netFolder", path: ["网络(WORKGROUP)", "https://localhost"] }}
          tree={quickTree}
        >
          <FileTable dated />
        </ExplorerWindow>
        <Annotations />
        <Watermark>CSDN @Mongnewer</Watermark>
      </Desktop>
    </>
  );
}

/* ---------- styles ---------- */

const GlobalStyle = createGlobalStyle`
  * {
    box-sizing: border-box;
  }

  body {
    margin: 0;
    overflow: hidden;
    font-family: "Noto Sans", "Noto Sans CJK SC", sans-serif;
    font-size: 18px;
    line-height: 24px;
    color: #000;
  }

  button,
  input {
    font: inherit;
    color: inherit;
  }

  a {
    color: inherit;
    text-decoration: none;
  }
`;

const DefsSvg = styled.svg`
  position: absolute;
  width: 0;
  height: 0;
`;

const Drawing = styled.svg`
  display: block;
  flex: none;
  overflow: visible;
`;

const Desktop = styled.main`
  position: relative;
  height: 100vh;
  overflow: hidden;
  background: #0063b1;
`;

const places = {
  computer: css`
    top: -1px;
    left: -1px;
    right: 303px;
    border-color: #fff;
  `,
  http: css`
    top: 196px;
    left: 285px;
    right: 17px;
    border-color: #a0a0a0;
  `,
  https: css`
    top: 495px;
    left: 759px;
    right: -457px;
    border-color: #fff;
  `,
};

const Frame = styled.section`
  position: absolute;
  display: flex;
  flex-direction: column;
  background: #fff;
  border-style: solid;
  border-width: 1px 0 0 1px;
  ${({ $place }) => places[$place]}
`;

const PlainButton = styled.button`
  display: flex;
  align-items: center;
  justify-content: center;
  padding: 0;
  border: 0;
  background: none;
`;

const TitleRow = styled.header`
  display: flex;
  align-items: center;
  height: 44px;
  padding-left: 7px;
`;

const TitleRule = styled.span`
  width: 1px;
  height: 20px;
  margin: 0 ${({ $second }) => ($second ? "8px 0 16px" : "16px 0 9px")};
  background: #8c8c8c;
`;

const QuickButtons = styled.div`
  display: flex;
  gap: 7px;
  margin-right: 11px;
`;

const TitleText = styled.h1`
  margin: 0;
  padding-bottom: 2px;
  font-size: 18px;
  font-weight: 400;
  color: ${({ $active }) => ($active ? "#000" : "#999")};
`;

const WindowControls = styled.div`
  display: flex;
  margin-left: auto;
`;

const ControlButton = styled(PlainButton)`
  width: 70px;
  height: 44px;
`;

const TabRow = styled.nav`
  display: flex;
  height: 38px;
  border-bottom: 1px solid ${({ $plain }) => ($plain ? "#fff" : line)};
`;

const FileTab = styled.button`
  width: 84px;
  height: 34px;
  padding: 0;
  border: 0;
  background: #1a5699;
  color: #fff;
`;

const Tab = styled.button`
  height: 38px;
  margin-right: 1px;
  padding: 0 19px 3px;
  border: 1px solid transparent;
  border-bottom: 0;
  background: none;
  color: #262626;

  ${({ $active }) =>
    $active &&
    css`
      border-color: ${line};
      background: ${panel};
    `}
`;

const TabTools = styled.div`
  display: flex;
  align-items: center;
  gap: 13px;
  margin-left: auto;
  padding: 0 5px 2px 0;
`;

const HelpButton = styled.button`
  width: 22px;
  height: 22px;
  padding: 0;
  border: 1px solid #0a4f94;
  border-radius: 50%;
  background: #0066cc;
  color: #fff;
  font-size: 16px;
  font-weight: 600;
  line-height: 20px;
`;

const Ribbon = styled.div`
  display: flex;
  height: 150px;
  overflow: visible;
  border-bottom: 1px solid ${({ $plain }) => ($plain ? "#fff" : line)};
  background: ${({ $plain }) => ($plain ? "#fff" : panel)};
`;

const RibbonEnd = styled.div`
  width: 71px;
  height: 151px;
  margin: -1px 0 0 auto;
  border: solid ${line};
  border-width: 1px 0;
  background: ${panel};
`;

const Group = styled.div`
  position: relative;
  display: flex;
  flex: none;
  flex-direction: column;
  margin: 3px 0;
  padding: 0 10px 0 ${({ $lead }) => ($lead ? 9 : 5)}px;

  &::after {
    content: "";
    position: absolute;
    top: ${({ $shortRule }) => ($shortRule ? 117 : 0)}px;
    right: 0;
    bottom: 0;
    width: 1px;
    background: #dcdddf;
  }
`;

const GroupContent = styled.div`
  display: flex;
  height: 118px;
`;

const BigButton = styled.button`
  display: flex;
  flex-direction: column;
  align-items: center;
  width: ${({ $wide }) => ($wide ? 79 : 62)}px;
  height: 108px;
  margin-top: 3px;
  padding: 4px 0 0;
  border: 0;
  background: ${({ $tinted }) => ($tinted ? panel : "none")};
  color: #262626;

  &:disabled {
    color: #737373;
  }
`;

const BigLabel = styled.span`
  display: flex;
  flex-direction: column;
  align-items: center;
  margin-top: 4px;
  white-space: nowrap;

  span {
    display: flex;
    align-items: center;
    gap: 5px;
  }
`;

const InnerRule = styled.span`
  width: 2px;
  height: 100px;
  margin: 7px 3px 0 6px;
  background: #dcdddf;
`;

const ActionList = styled.div`
  display: flex;
  flex-direction: column;
  padding: ${({ $roomy }) => ($roomy ? 4 : 3)}px 5px 0;
`;

const ActionButton = styled.button`
  display: flex;
  align-items: center;
  gap: 3px;
  height: ${({ $roomy }) => ($roomy ? 35 : 32)}px;
  padding: 0;
  border: 0;
  background: none;
  color: #262626;
  white-space: nowrap;

  span + svg {
    margin-left: 3px;
  }

  &:disabled {
    color: #737373;
  }
`;

const GroupLabel = styled.div`
  text-align: center;
  color: #444;
`;

const AddressBar = styled.div`
  display: flex;
  height: 58px;
  padding: 5px 13px 7px 19px;
`;

const NavButtons = styled.div`
  display: flex;
  align-items: center;
  width: 139px;
  gap: 20px;

  button:first-child {
    margin-right: 6px;
  }
`;

const AddressBox = styled.div`
  display: flex;
  flex: 1;
  align-items: center;
  border: 1px solid #d9d9d9;
`;

const Crumb = styled.span`
  display: flex;
  align-items: center;
  gap: 12px;
  padding-left: 12px;
`;

const CrumbLink = styled.a`
  padding-bottom: 2px;
  white-space: nowrap;
`;

const BoxTools = styled.div`
  display: flex;
  align-self: stretch;
  margin-left: auto;
`;

const BoxButton = styled(PlainButton)`
  width: 45px;

  ${({ $ruled }) =>
    $ruled &&
    css`
      border-left: 1px solid #d9d9d9;
    `}
`;

const SearchBox = styled.div`
  display: flex;
  align-items: center;
  width: 148px;
  margin-left: 12px;
  padding-right: 12px;
  border: 1px solid #d9d9d9;
`;

const SearchInput = styled.input`
  flex: 1;
  min-width: 0;
  height: 44px;
  border: 0;
  outline: 0;
  background: none;
`;

const Body = styled.div`
  display: flex;
  height: 446px;
  overflow: hidden;
`;

const TreeList = styled.ul`
  flex: none;
  width: 238px;
  margin: 0 1px 0 0;
  padding: 0;
  list-style: none;
`;

const TreeRow = styled.li`
  display: flex;
  align-items: center;
  gap: 5px;
  height: 36px;
  margin-top: ${({ $spaced }) => ($spaced ? 12 : 0)}px;
  padding: 0 3px 0 ${({ $depth }) => 36 + $depth * 12}px;
  background: ${({ $selected }) => ($selected ? "#d9d9d9" : "none")};
`;

const TreeLink = styled.a`
  flex: 1;
  white-space: nowrap;
`;

const Track = styled.div`
  display: flex;
  flex: none;
  flex-direction: column;
  width: 25px;
  background: #f0f0f0;
`;

const Thumb = styled.div`
  height: 142px;
  margin: ${({ $middle }) => ($middle ? 98 : 0)}px 1px auto 0;
  background: #cdcdcd;
`;

const PaneRule = styled.div`
  flex: none;
  width: 2px;
  margin: 0 18px 0 2px;
  background: #f5f5f5;
`;

const FilePane = styled.div`
  flex: 1;
  min-width: 0;
`;

const GroupMark = styled(Drawing)`
  margin: 60px 0 0 -6px;
`;

const Table = styled.table`
  width: 1022px;
  table-layout: fixed;
  border-collapse: separate;
  border-spacing: 0;

  tbody::before {
    content: "";
    display: block;
    height: 9px;
  }
`;

const HeadCell = styled.th`
  position: relative;
  height: 40px;
  padding: 0 10px;
  border-right: 1px solid #e5e5e5;
  font-weight: 400;
  text-align: left;
  color: #4c607a;
`;

const SortMark = styled(Drawing)`
  position: absolute;
  top: 0;
  left: 50%;
  margin-left: -6px;
`;

const NameCell = styled.td`
  height: 32px;
  padding: 0 10px;
`;

const DateCell = styled.td`
  padding: 0 10px;
  color: #6d6d6d;
  white-space: nowrap;
`;

const FileName = styled.span`
  display: flex;
  align-items: center;
  gap: 7px;
`;

const StatusBar = styled.footer`
  display: flex;
  align-items: center;
  height: 35px;
  padding-left: 23px;
  color: #1e395b;

  span {
    padding-right: 18px;
    border-right: 1px solid #ededed;
    line-height: 18px;
  }
`;

const Overlay = styled.svg`
  position: absolute;
  inset: 0;
  width: 100%;
  height: 100%;
  pointer-events: none;
`;

const Watermark = styled.div`
  position: absolute;
  right: 15px;
  bottom: 5px;
  font-family: "Liberation Sans", sans-serif;
  font-size: 14px;
  color: #8f8f8f;
`;
